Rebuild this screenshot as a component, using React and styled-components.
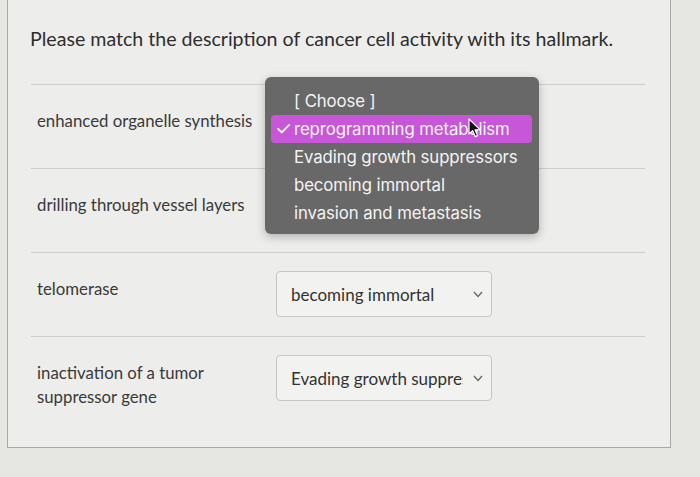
import styled, { createGlobalStyle } from 'styled-components';

const GlobalStyle = createGlobalStyle`
  html, body {
    margin: 0;
    padding: 0;
    background: #e6e6e3;
  }
  body {
    font-family: Lato, "Open Sans", sans-serif;
    color: #333;
  }
`;

const Card = styled.section`
  width: 664px;
  margin-left: 7px;
  box-sizing: border-box;
  background: #ededeb;
  border: 1px solid #a9a9a7;
  border-top: none;
  padding: 26px 25px 19px 22px;
`;

const Title = styled.h2`
  margin: 0 0 32px;
  font-size: 19.6px;
  line-height: 26px;
  font-weight: 400;
  color: #2e2e2e;
`;

const Rows = styled.div`
  margin-left: 1px;
`;

const Row = styled.div`
  display: flex;
  align-items: flex-start;
  border-top: 1px solid #cdcdca;
  padding: 18px 0 19px 6px;
`;

const Label = styled.div`
  width: ${(p) => p.$width}px;
  margin-right: ${(p) => 239 - p.$width}px;
  padding-top: 6px;
  font-size: 16.8px;
  line-height: 24px;
  color: #3a3a3a;
`;

const SelectWrap = styled.div`
  position: relative;
  width: 216px;
  height: 46px;
`;

const SelectBox = styled.div`
  box-sizing: border-box;
  height: 100%;
  display: flex;
  align-items: center;
  justify-content: space-between;
  padding: 0 8px 0 14px;
  background: #f2f2f0;
  border: 1px solid #c6c6c4;
  border-radius: 4px;
  font-size: 17px;
  color: #333;
  white-space: nowrap;
  overflow: hidden;
`;

const SelectText = styled.span`
  overflow: hidden;
  width: 172px;
`;

const Menu = styled.ul`
  position: absolute;
  top: -26px;
  left: -11px;
  z-index: 2;
  width: 274px;
  box-sizing: border-box;
  margin: 0;
  padding: 10px 7px 7px 6px;
  list-style: none;
  background: #686868;
  border-radius: 6px;
  box-shadow: 0 3px 10px rgba(0, 0, 0, 0.25);
  font-family: Inter, "Noto Sans", sans-serif;
  font-size: 16.8px;
  letter-spacing: -0.1px;
`;

const MenuItem = styled.li`
  position: relative;
  height: 28px;
  line-height: 28px;
  padding-left: 23px;
  border-radius: 4px;
  color: #f4f4f4;
  white-space: nowrap;
  background: ${(p) => (p.$active ? '#c757d8' : 'transparent')};
`;

const Check = styled.span`
  position: absolute;
  left: 4px;
  top: 0;
  font-size: 19px;
  color: #fff;
`;

const Cursor = styled.svg`
  position: absolute;
  left: 203px;
  top: 41px;
  z-index: 3;
`;

const Chevron = () => (
  <svg width="10" height="7" viewBox="0 0 10 7">
    <polyline points="1,1 5,5.5 9,1" fill="none" stroke="#666" strokeWidth="1.3" />
  </svg>
);

const options = [
  '[ Choose ]',
  'reprogramming metabolism',
  'Evading growth suppressors',
  'becoming immortal',
  'invasion and metastasis',
];

const rows = [
  { label: 'enhanced organelle synthesis', value: 'reprogramming metabolism', open: true, width: 239 },
  { label: 'drilling through vessel layers', value: '[ Choose ]', width: 239 },
  { label: 'telomerase', value: 'becoming immortal', width: 239 },
  { label: 'inactivation of a tumor suppressor gene', value: 'Evading growth suppressors', width: 185 },
];

function Select({ value, open }) {
  return (
    <SelectWrap>
      <SelectBox>
        <SelectText>{open ? '' : value}</SelectText>
        <Chevron />
      </SelectBox>
      {open && (
        <Menu>
          {options.map((o) => (
            <MenuItem key={o} $active={o === value}>
              {o === value && <Check>✓</Check>}
              {o}
            </MenuItem>
          ))}
          <Cursor width="14" height="21" viewBox="0 0 14 21">
            <path
              d="M1 1 L1 16 L4.6 12.6 L7.2 18.6 L9.6 17.6 L7 11.8 L12 11.6 Z"
              fill="#111"
              stroke="#fff"
              strokeWidth="1.2"
              strokeLinejoin="round"
            />
          </Cursor>
        </Menu>
      )}
    </SelectWrap>
  );
}

export default function App() {
  return (
    <>
      <GlobalStyle />
      <Card>
        <Title>Please match the description of cancer cell activity with its hallmark.</Title>
        <Rows>
          {rows.map((r) => (
            <Row key={r.label}>
              <Label $width={r.width}>{r.label}</Label>
              <Select value={r.value} open={r.open} />
            </Row>
          ))}
        </Rows>
      </Card>
    </>
  );
}
